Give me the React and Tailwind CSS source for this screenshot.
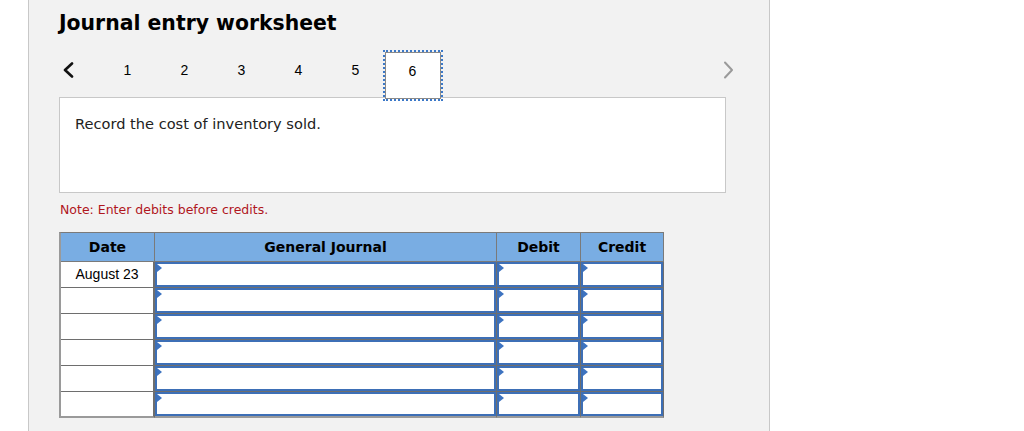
import React from 'react';

const verdana = { fontFamily: '"DejaVu Sans", Verdana, sans-serif' };
const arial = { fontFamily: '"Liberation Sans", Arial, sans-serif' };

function InputCell({ last }) {
  return (
    <div className={`relative h-[26px] ${last ? 'border-b-2 border-b-[#9a9a9a]' : 'border-b border-b-[#6e6e6e]'} border-r border-r-[#6e6e6e]`}>
      <div className="absolute inset-0 border-2 border-[#3d6fb6] bg-white" />
      <div className="absolute top-[2px] left-[2px] w-0 h-0 border-y-[4px] border-y-transparent border-l-[5px] border-l-[#3d73c0]" />
    </div>
  );
}

export default function App() {
  const rows = ['August 23', '', '', '', '', ''];
  const pages = [1, 2, 3, 4, 5];

  return (
    <div className="flex h-[431px] bg-white overflow-hidden">
      <div className="ml-[28px] w-[742px] h-full bg-[#f2f2f2] border-x border-[#c8c8c8] pl-[30px] pt-[11px]">
        {/* Title */}
        <h1 style={verdana} className="text-[20.4px] leading-[24px] font-bold text-black">
          Journal entry worksheet
        </h1>

        {/* Step navigation */}
        <div style={arial} className="flex items-start h-[51px] mt-[15px] w-[667px] text-[14px] text-black">
          <div className="w-[40px] flex-none pt-[12px] pl-[3px]">
            <svg width="13" height="16" viewBox="0 0 13 16">
              <path d="M10 1.5 L3 8 L10 14.5" fill="none" stroke="#111" strokeWidth="2.6" strokeLinecap="round" strokeLinejoin="round" />
            </svg>
          </div>
          {pages.map((p) => (
            <div key={p} className="w-[57px] flex-none flex justify-center pt-[10px] leading-[20px]">
              {p}
            </div>
          ))}
          <div className="w-[57px] flex-none flex justify-center">
            <div className="w-[60px] h-[51px] flex-none border-2 border-dotted border-[#3b78c8]">
              <div className="h-full border border-[#8a8a8a] bg-white flex justify-center pt-[8px] leading-[20px]">
                6
              </div>
            </div>
          </div>
          <div className="ml-auto mr-[-8px] pt-[11px]">
            <svg width="11" height="18" viewBox="0 0 11 18">
              <path d="M2 1.5 L9 9 L2 16.5" fill="none" stroke="#9a9a9a" strokeWidth="2" strokeLinecap="round" strokeLinejoin="round" />
            </svg>
          </div>
        </div>

        {/* Prompt box */}
        <div style={verdana} className="mt-[-4px] w-[667px] h-[96px] bg-white border border-[#c8c8c8] pl-[15px] pt-[17px] text-[14.6px] leading-[17px] text-[#222]">
          Record the cost of inventory sold.
        </div>

        <p style={verdana} className="mt-[9px] ml-[1px] text-[12.5px] leading-[16px] text-[#b0161d]">
          Note: Enter debits before credits.
        </p>

        {/* Journal table */}
        <div className="mt-[14px] w-[605px] grid grid-cols-[94px_342px_84px_83px] border-l-2 border-t border-l-[#9a9a9a] border-t-[#7a7a7a]">
          {['Date', 'General Journal', 'Debit', 'Credit'].map((h) => (
            <div
              key={h}
              style={verdana}
              className="h-[29px] pt-[1px] bg-[#79ade3] border-r border-b border-[#7a7a7a] flex items-center justify-center font-bold text-[14px] text-black"
            >
              {h}
            </div>
          ))}
          {rows.map((d, i) => {
            const last = i === rows.length - 1;
            return (
              <React.Fragment key={i}>
                <div
                  style={arial}
                  className={`h-[26px] ${last ? 'border-b-2 border-b-[#9a9a9a]' : 'border-b border-b-[#6e6e6e]'} bg-white border-r-2 border-r-[#6e6e6e] flex items-center justify-center text-[14px] text-black`}
                >
                  {d}
                </div>
                <InputCell last={last} />
                <InputCell last={last} />
                <InputCell last={last} />
              </React.Fragment>
            );
          })}
        </div>
      </div>
    </div>
  );
}
